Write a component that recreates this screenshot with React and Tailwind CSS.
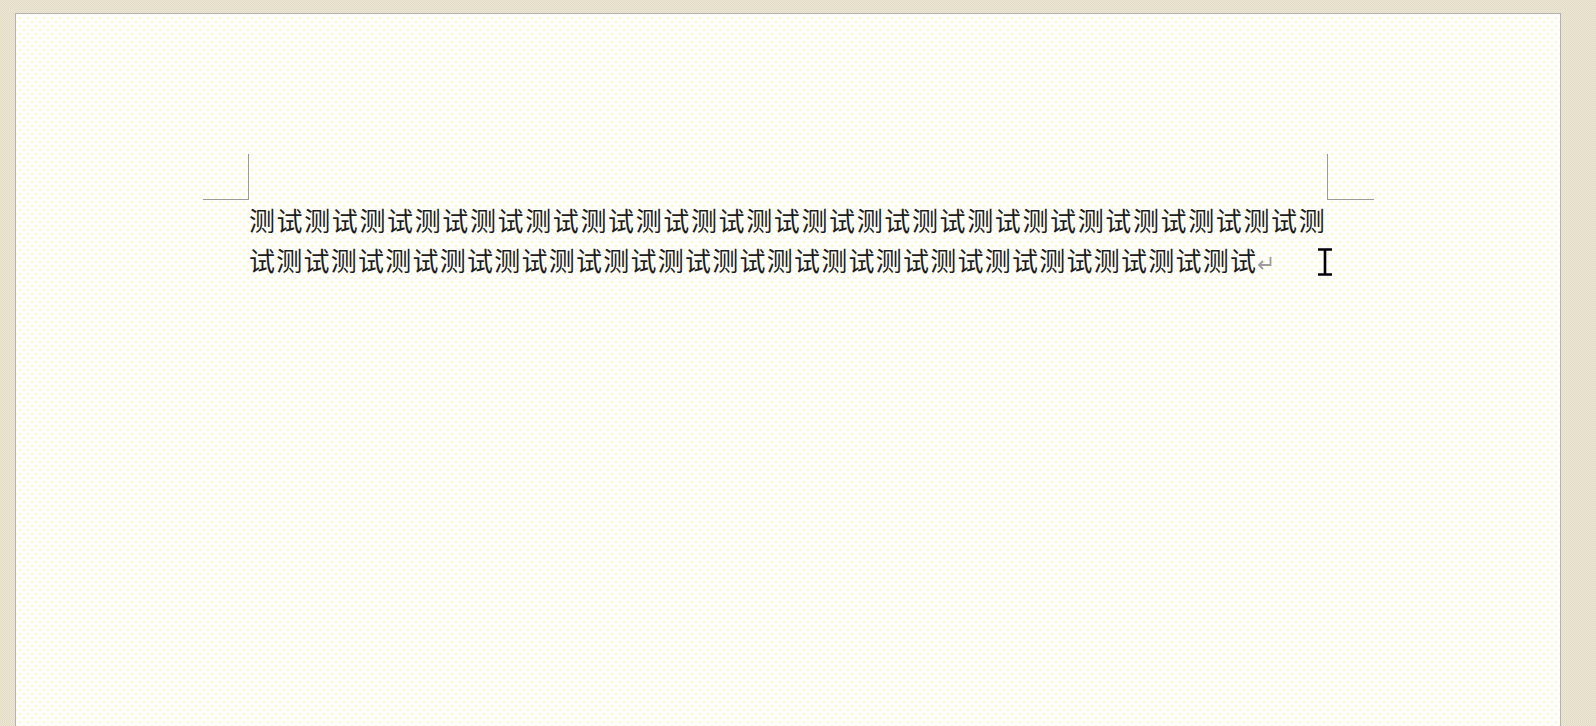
import React from "react";

export default function App() {
  const text = "测试".repeat(38);
  return (
    <div className="h-[726px] w-full overflow-hidden bg-[#e9e6e2] bg-[repeating-conic-gradient(#f1eab0_0_25%,#dedaea_0_50%)] bg-[length:2px_2px] pt-[13px] pl-[15px] pr-[35px]">
      <div className="h-[760px] border-l border-t border-r border-[#b4b1b6] bg-[#fdfdfd] bg-[radial-gradient(circle,#fcf4a8_0.6px,transparent_0.9px),radial-gradient(circle,#fcf4a8_0.6px,transparent_0.9px)] bg-[length:8px_8px] bg-[position:0_0,4px_4px] pt-[140px] pl-[187px]">
        <div className="flex w-[1171px]">
          <div className="h-[46px] w-[46px] border-r border-b border-[#9a9a9a]" />
          <div className="ml-auto h-[46px] w-[47px] border-l border-b border-[#9a9a9a]" />
        </div>
        <div className="ml-[46px] flex w-[1130px]">
          <p
            className="w-[1077px] text-justify text-[26px] leading-[40px] tracking-[1.25px] text-[#1c1c1c] break-all"
            style={{ fontFamily: '"Noto Sans CJK SC", "Noto Sans", sans-serif' }}
          >
            {text}
            <svg className="inline-block align-[0px]" width="16" height="15" viewBox="0 0 16 15">
              <path d="M13.5 1 V9 H2" fill="none" stroke="#9c9c9c" strokeWidth="1.8" />
              <path d="M6 5 L2 9 L6 13" fill="none" stroke="#9c9c9c" strokeWidth="1.8" />
            </svg>
          </p>
          <div className="mt-[48px] ml-[-9px]">
            <svg width="16" height="28" viewBox="0 0 16 28">
              <path d="M1 1.5 H15 M8 1.5 V26.5 M1 26.5 H15" fill="none" stroke="#000" strokeWidth="2.6" />
            </svg>
          </div>
        </div>
      </div>
    </div>
  );
}
